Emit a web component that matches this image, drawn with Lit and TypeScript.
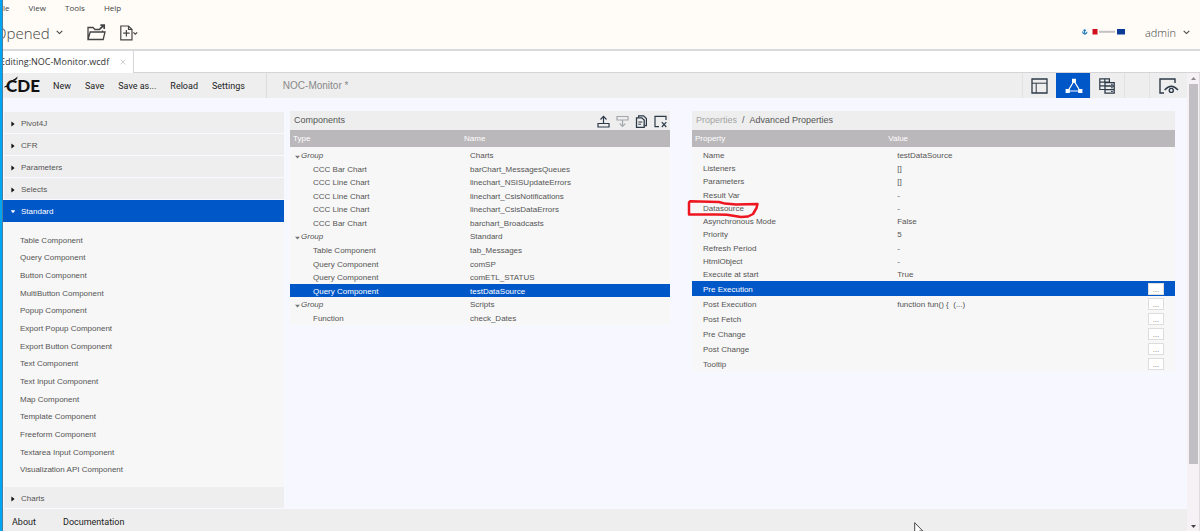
import { LitElement, html, css, svg, nothing } from "lit";
import { customElement, property, state } from "lit/decorators.js";
import { classMap } from "lit/directives/class-map.js";

interface ComponentRow {
  type: string;
  name: string;
  group?: boolean;
}

interface PropertyRow {
  label: string;
  value: string;
  marked?: boolean;
}

const COMPONENTS: ComponentRow[] = [
  { type: "Group", name: "Charts", group: true },
  { type: "CCC Bar Chart", name: "barChart_MessagesQueues" },
  { type: "CCC Line Chart", name: "linechart_NSISUpdateErrors" },
  { type: "CCC Line Chart", name: "linechart_CsisNotifications" },
  { type: "CCC Line Chart", name: "linechart_CsisDataErrors" },
  { type: "CCC Bar Chart", name: "barchart_Broadcasts" },
  { type: "Group", name: "Standard", group: true },
  { type: "Table Component", name: "tab_Messages" },
  { type: "Query Component", name: "comSP" },
  { type: "Query Component", name: "comETL_STATUS" },
  { type: "Query Component", name: "testDataSource" },
  { type: "Group", name: "Scripts", group: true },
  { type: "Function", name: "check_Dates" },
];

const PLAIN_PROPERTIES: PropertyRow[] = [
  { label: "Name", value: "testDataSource" },
  { label: "Listeners", value: "[]" },
  { label: "Parameters", value: "[]" },
  { label: "Result Var", value: "-" },
  { label: "Datasource", value: "-", marked: true },
  { label: "Asynchronous Mode", value: "False" },
  { label: "Priority", value: "5" },
  { label: "Refresh Period", value: "-" },
  { label: "HtmlObject", value: "-" },
  { label: "Execute at start", value: "True" },
];

const CODE_PROPERTIES: PropertyRow[] = [
  { label: "Pre Execution", value: "" },
  { label: "Post Execution", value: "function fun() {\u00a0 (...)" },
  { label: "Post Fetch", value: "" },
  { label: "Pre Change", value: "" },
  { label: "Post Change", value: "" },
  { label: "Tooltip", value: "" },
];

const STANDARD_ITEMS = [
  "Table Component",
  "Query Component",
  "Button Component",
  "MultiButton Component",
  "Popup Component",
  "Export Popup Component",
  "Export Button Component",
  "Text Component",
  "Text Input Component",
  "Map Component",
  "Template Component",
  "Freeform Component",
  "Textarea Input Component",
  "Visualization API Component",
];

const icon = (w: number, h: number, body: unknown) =>
  html`<svg width=${w} height=${h} viewBox="0 0 ${w} ${h}" fill="none" stroke="currentColor" aria-hidden="true">${body}</svg>`;

const chevron = icon(7, 5, svg`<path d="M0.7 0.9 L3.5 3.6 L6.3 0.9" stroke-width="1.1"/>`);

const reset = css`
  * { box-sizing: border-box; }
  button {
    font: inherit;
    color: inherit;
    background: none;
    border: 0;
    padding: 0;
    margin: 0;
    text-align: left;
  }
  svg { display: block; flex: none; }
  a { color: inherit; text-decoration: none; }
`;

@customElement("console-header")
export class ConsoleHeader extends LitElement {
  static styles = [
    reset,
    css`
      :host {
        display: block;
        overflow: hidden;
        background: #fffcf7;
        border-bottom: 2px solid #dadadd;
        color: #444;
        font-family: "Open Sans", sans-serif;
      }
      .menu {
        display: flex;
        gap: 19px;
        height: 16px;
        align-items: center;
        font-size: 8px;
        line-height: 12px;
      }
      .bar {
        display: flex;
        align-items: center;
        height: 33px;
        padding-right: 10px;
      }
      .perspective {
        display: flex;
        align-items: center;
        gap: 6px;
        margin-left: -8px;
        font-size: 15px;
        font-weight: 300;
        line-height: 20px;
      }
      .open { margin-left: 24px; }
      .new { margin-left: 14px; display: flex; align-items: center; }
      .brand { margin-left: auto; }
      .user {
        display: flex;
        align-items: center;
        gap: 7px;
        margin-left: 20px;
        font-size: 11px;
        font-weight: 300;
        line-height: 16px;
      }
    `,
  ];

  render() {
    return html`
      <nav class="menu">
        <button>le</button><button>View</button><button>Tools</button><button>Help</button>
      </nav>
      <div class="bar">
        <button class="perspective">Opened ${chevron}</button>
        <button class="open" aria-label="Open">
          ${icon(19, 17, svg`<path d="M1 15.5 V3.5 H6 L8 5.5 H13 M15.5 8 V6.5 M1 15.5 L3.2 8 H18 L16.2 15.5 Z" stroke-width="1.3"/><path d="M12.8 5 L17 1.2 M13.4 1.2 H17.2 V5" stroke-width="1.7"/>`)}
        </button>
        <button class="new" aria-label="Create new">
          ${icon(18, 16, svg`<path d="M0.8 1 H8.5 L12 4.5 V14.8 H0.8 Z M8.5 1 V4.5 H12" stroke-width="1.2"/><path d="M3.2 8.2 H9.6 M6.4 5 V11.4" stroke-width="1.2"/><path d="M13.4 7.4 L15.3 9.2 L17.2 7.4" stroke-width="1.2"/>`)}
        </button>
        <svg class="brand" width="43" height="7" viewBox="0 0 43 7" aria-hidden="true">
          <path d="M0.5 2.4 Q0.8 5.2 3 5.2 Q4.8 4.8 5 2.8 M2.6 0.2 V4.8 M1.3 1.4 H4" stroke="#2a7fc0" fill="none" stroke-width="1.2" />
          <rect x="10.5" y="0" width="5" height="5.5" fill="#d0101e" />
          <rect x="17" y="1.8" width="16" height="2" fill="#c2c2c4" />
          <rect x="35" y="0" width="8" height="5.5" fill="#0b3a96" />
        </svg>
        <button class="user">admin ${chevron}</button>
      </div>
    `;
  }
}

@customElement("editor-toolbar")
export class EditorToolbar extends LitElement {
  static styles = [
    reset,
    css`
      :host {
        display: flex;
        align-items: stretch;
        height: 25px;
        background: #eee;
        color: #222;
        font: 9px/12px Roboto, sans-serif;
      }
      .logo {
        display: flex;
        align-items: center;
        width: 38px;
        margin-right: 12px;
      }
      .mark { margin-right: -13px; }
      .word { font: 900 17px/20px Lato, sans-serif; color: #111; }
      .actions {
        display: flex;
        gap: 14px;
        align-items: center;
        padding-right: 21px;
        border-right: 1px solid #dcdcdc;
      }
      .title {
        flex: 1;
        display: flex;
        align-items: center;
        padding-left: 16px;
        color: #888;
        font: 10px/14px "Liberation Sans", sans-serif;
      }
      .views { display: flex; }
      .view, .spacer, .preview {
        display: flex;
        align-items: center;
        justify-content: center;
        width: 34px;
        border-left: 1px solid #e2e2e2;
        color: #2d3a48;
      }
      .spacer { width: 25px; }
      .preview { width: 38px; }
      .active { background: #0057c8; color: #fff; border-color: #0057c8; }
    `,
  ];

  render() {
    return html`
      <div class="logo">
        <svg class="mark" width="16" height="19" viewBox="0 0 16 19" aria-hidden="true">
          <path d="M0.8 11.6 Q1.6 9.6 3.6 9.4 L5 8 V11.6 Q3.6 10.6 0.8 11.6 Z M10 3.4 Q11.4 3.4 14.6 0.4 Q14.2 4 10.6 4.8 Z" fill="#111" />
        </svg>
        <span class="word">CDE</span>
      </div>
      <nav class="actions">
        <button>New</button><button>Save</button><button>Save as...</button><button>Reload</button><button>Settings</button>
      </nav>
      <span class="title">NOC-Monitor *</span>
      <div class="views">
        <button class="view" aria-label="Layout">
          ${icon(17, 16, svg`<path d="M1 1 H16 V15 H1 Z" stroke-width="1.3"/><path d="M1 5.2 H16 M5.2 5.2 V15" stroke-width="1"/>`)}
        </button>
        <button class="view active" aria-label="Components">
          ${icon(18, 16, svg`<path d="M9 3 L3 13 H15 Z" stroke-width="1.2"/><path d="M7 0.8 H11 V4.8 H7 Z M0.6 11 H4.8 V15 H0.6 Z M13.2 11 H17.4 V15 H13.2 Z" fill="currentColor" stroke="none"/>`)}
        </button>
        <button class="view" aria-label="Datasources">
          ${icon(17, 16, svg`<path d="M6 11.5 H0.8 V0.8 H10.4 V4 M0.8 4.2 H10.4 M0.8 7.8 H6 M5.8 0.8 V4" stroke-width="1.2"/><path d="M6 4.6 H15.2 V15.2 H6 Z M6 8 H15.2 M6 11.6 H15.2" stroke-width="1.3"/><path d="M12 6.3 H13.8 M12 9.8 H13.8 M12 13.4 H13.8" stroke-width="1"/>`)}
        </button>
        <span class="spacer"></span>
        <button class="preview" aria-label="Preview">
          ${icon(20, 16, svg`<path d="M5 15 H1 V1 H16 V5" stroke-width="1.4"/><path d="M5.6 12 Q12.3 4.4 19 12" stroke-width="1.4"/><circle cx="12.3" cy="12.4" r="2" stroke-width="1.4"/>`)}
        </button>
      </div>
    `;
  }
}

@customElement("component-palette")
export class ComponentPalette extends LitElement {
  static styles = [
    reset,
    css`
      :host {
        display: flex;
        flex-direction: column;
        font: 8px/12px "Liberation Sans", sans-serif;
        color: #555;
      }
      .section {
        display: flex;
        align-items: center;
        gap: 6px;
        height: 22px;
        padding: 2px 0 0 7px;
        margin-left: 1px;
        background: #eee;
        border-bottom: 1px solid #f9f9ff;
      }
      .section svg { fill: #111; }
      .open { background: #0057c8; color: #fff; border-bottom: 0; margin-left: 0; padding-left: 8px; }
      .open svg { fill: #fff; }
      .items {
        flex: 1;
        display: flex;
        flex-direction: column;
        margin: 0;
        padding: 10px 0 8px 17px;
        list-style: none;
        background: #f7f7f7;
      }
      .item { flex: 1; display: flex; align-items: center; }
    `,
  ];

  private section(label: string, open = false) {
    return html`
      <button class=${classMap({ section: true, open })} aria-expanded=${open}>
        <svg width="4" height="6" viewBox="0 0 4 6" aria-hidden="true">
          <path d=${open ? "M-0.5 1.2 H4.5 L2 4.2 Z" : "M0.4 0.4 L3.6 3 L0.4 5.6 Z"} />
        </svg>${label}
      </button>
    `;
  }

  render() {
    return html`
      ${["Pivot4J", "CFR", "Parameters", "Selects"].map((s) => this.section(s))}
      ${this.section("Standard", true)}
      <ul class="items">
        ${STANDARD_ITEMS.map((s) => html`<li class="item"><a href="#">${s}</a></li>`)}
      </ul>
      ${this.section("Charts")}
    `;
  }
}

const tableStyles = css`
  :host {
    display: block;
    color: #555;
    font: 8px/10px "Liberation Sans", sans-serif;
  }
  .head {
    display: flex;
    align-items: center;
    height: 19px;
    padding: 0 3px 2px 4px;
    background: #eee;
    font-size: 9px;
    line-height: 12px;
  }
  table {
    width: 100%;
    border-collapse: separate;
    border-spacing: 0;
    table-layout: fixed;
    background: #f7f7f7;
  }
  th {
    height: 18px;
    padding: 0 3px;
    border-bottom: 1px solid #f7f7f7;
    background: #bbb8bb;
    background-clip: padding-box;
    color: #fff;
    font-weight: 400;
    text-align: left;
  }
  td {
    height: 13px;
    padding: 2px 10px 0;
    white-space: nowrap;
  }
  .selected { background: #0057c8; color: #fff; }
`;

@customElement("components-panel")
export class ComponentsPanel extends LitElement {
  @state() private selected = "testDataSource";

  static styles = [
    reset,
    tableStyles,
    css`
      .tools { display: flex; align-items: center; gap: 6px; margin-left: auto; padding-top: 4px; color: #2d3a48; }
      .disabled { color: #a3a6aa; }
      .type { width: 45%; }
      .rows { height: 177px; }
      .rows td { padding-left: 9px; }
      .rows .kind { padding-left: 23px; }
      .rows .group td { height: 14px; }
      .rows .group .kind { padding-left: 5px; font-style: italic; }
      .label { display: flex; align-items: center; gap: 1px; }
      .label svg { fill: #777; }
    `,
  ];

  render() {
    return html`
      <div class="head">
        <span>Components</span>
        <div class="tools">
          <button aria-label="Move up">
            ${icon(13, 13, svg`<path d="M1 8.5 H12 V12 H1 Z M6.5 8 V1.5 M3.5 4.5 L6.5 1.4 L9.5 4.5" stroke-width="1.2"/>`)}
          </button>
          <button class="disabled" aria-label="Move down" disabled>
            ${icon(13, 13, svg`<path d="M1 1.5 H12 V5 H1 Z M6.5 5 V11.3 M3.7 8.6 L6.5 11.5 L9.3 8.6" stroke-width="1.2"/>`)}
          </button>
          <button aria-label="Duplicate">
            ${icon(13, 13, svg`<path d="M3.6 2.8 V0.8 H8.6 L11.4 3.5 V10.6 H9.5" stroke-width="1.2"/><path d="M1.5 2.8 H6.8 L9.2 5.1 V12.3 H1.5 Z" stroke-width="1.3"/><path d="M3.3 7 H7.4 M3.3 9.2 H6" stroke-width="1"/>`)}
          </button>
          <button aria-label="Delete">
            ${icon(13, 13, svg`<path d="M5 11.6 H1 V1.3 H12 V5" stroke-width="1.2"/><path d="M7.8 7.2 L12.3 12 M12.3 7.2 L7.8 12" stroke-width="1.2"/>`)}
          </button>
        </div>
      </div>
      <table>
        <thead>
          <tr><th class="type">Type</th><th>Name</th></tr>
        </thead>
        <tbody class="rows">
          ${COMPONENTS.map(
            (r) => html`
              <tr
                class=${classMap({ group: !!r.group, selected: r.name === this.selected })}
                @click=${() => (this.selected = r.name)}
              >
                <td class="kind">
                  <span class="label">
                    ${r.group
                      ? html`<svg width="5" height="5" viewBox="0 0 5 5" aria-hidden="true"><path d="M0 1.8 H5 L2.5 4.6 Z" /></svg>`
                      : nothing}${r.type}
                  </span>
                </td>
                <td>${r.name}</td>
              </tr>
            `
          )}
        </tbody>
      </table>
    `;
  }
}

@customElement("properties-panel")
export class PropertiesPanel extends LitElement {
  @property() current = "Pre Execution";

  static styles = [
    reset,
    tableStyles,
    css`
      .crumb { color: #a3a3a3; }
      .sep { margin: 0 5px; }
      .prop { width: 40%; }
      .edit { width: 40px; }
      .plain { height: 133px; }
      .code { height: 91px; }
      .code td { height: 15px; }
      td:first-child { padding-left: 11px; }
      td:nth-child(2) { padding-left: 12px; }
      .code .action { padding: 0 11px 0 0; }
      .more {
        display: block;
        width: 16px;
        height: 12px;
        margin-left: auto;
        border: 1px solid #ddd;
        background: #fff;
        color: #777;
        line-height: 11px;
        text-align: center;
      }
      .mark { position: relative; }
      .scribble { position: absolute; left: -16px; top: -5px; }
    `,
  ];

  render() {
    return html`
      <div class="head">
        <a class="crumb" href="#">Properties</a><span class="sep">/</span><span>Advanced Properties</span>
      </div>
      <table>
        <thead>
          <tr><th class="prop">Property</th><th>Value</th><th class="edit"></th></tr>
        </thead>
        <tbody class="plain">
          ${PLAIN_PROPERTIES.map(
            (r) => html`
              <tr>
                <td>
                  ${r.marked
                    ? html`<span class="mark">${r.label}<svg class="scribble" width="74" height="20" viewBox="0 0 74 20" fill="none" stroke="#ee1620" stroke-width="2.5" stroke-linejoin="round" aria-hidden="true"><path d="M2 15.5 L2 3.5 L3 2.2 L32 3 L38 4.6 L49 5.5 L70.5 5 L69.5 9 L66 15 L61 17.5 L54 18 L40 15.8 L29 15.6 Z" /></svg></span>`
                    : r.label}
                </td>
                <td>${r.value}</td>
                <td></td>
              </tr>
            `
          )}
        </tbody>
        <tbody class="code">
          ${CODE_PROPERTIES.map(
            (r) => html`
              <tr class=${classMap({ selected: r.label === this.current })}>
                <td>${r.label}</td>
                <td>${r.value}</td>
                <td class="action"><button class="more" aria-label="Edit ${r.label}">...</button></td>
              </tr>
            `
          )}
        </tbody>
      </table>
    `;
  }
}

@customElement("app-root")
export class AppRoot extends LitElement {
  static styles = [
    reset,
    css`
      :host {
        display: flex;
        height: 100vh;
        overflow: hidden;
        background: #fff;
        font-family: "Liberation Sans", sans-serif;
      }
      .edge { flex: none; width: 3px; background: #00a6f3; border-right: 1px solid #4d7f9b; }
      .window { flex: 1; min-width: 0; display: flex; flex-direction: column; }
      .tabs {
        display: flex;
        height: 22px;
        overflow: hidden;
        color: #333;
        font: 9px/14px "Open Sans", sans-serif;
      }
      .tab {
        display: flex;
        align-items: center;
        gap: 11px;
        width: 131px;
        border-right: 1px solid #d5d5d9;
      }
      .caption { margin-left: -3px; white-space: nowrap; }
      .close { color: #c4c4c4; }
      .rest { flex: 1; border-bottom: 1px solid #d5d5d9; }
      .frame { flex: 1; min-height: 0; display: flex; }
      .page { flex: 1; min-width: 0; display: flex; flex-direction: column; background: #f7f7ff; }
      .main { flex: 1; min-height: 0; display: flex; padding: 13px 12px 0 0; }
      .palette { width: 281px; margin-right: 6px; padding-top: 1px; }
      .components { flex: 380; margin-right: 22px; }
      .properties { flex: 483; }
      .footer {
        position: relative;
        display: flex;
        align-items: center;
        gap: 27px;
        height: 22px;
        padding: 4px 9px 0;
        background: #eee;
        color: #222;
        font: 9px/12px Roboto, sans-serif;
      }
      .cursor { position: absolute; left: 911px; top: 13px; }
      .scroll {
        width: 13px;
        display: flex;
        flex-direction: column;
        align-items: center;
        justify-content: space-between;
        background: #f5f1f5;
        border-right: 1px solid #ddd;
        padding: 4px 0 3px;
      }
      .track { flex: 1; width: 9px; margin: 4px 0; }
      .thumb { height: 87%; background: #c1bfc3; }
    `,
  ];

  render() {
    return html`
      <div class="edge"></div>
      <div class="window">
        <console-header></console-header>
        <div class="tabs">
          <div class="tab">
            <span class="caption">Editing:NOC-Monitor.wcdf</span>
            <button class="close" aria-label="Close tab">
              ${icon(6, 6, svg`<path d="M0.6 0.6 L5.4 5.4 M5.4 0.6 L0.6 5.4" stroke-width="0.8"/>`)}
            </button>
          </div>
          <div class="rest"></div>
        </div>
        <div class="frame">
          <div class="page">
            <editor-toolbar></editor-toolbar>
            <main class="main">
              <component-palette class="palette"></component-palette>
              <components-panel class="components"></components-panel>
              <properties-panel class="properties"></properties-panel>
            </main>
            <footer class="footer">
              <a href="#">About</a><a href="#">Documentation</a>
              <svg class="cursor" width="10" height="14" viewBox="0 0 10 14" aria-hidden="true">
                <path d="M0.7 0.7 V12 L3.3 9.6 L5.2 13.6 L7 12.8 L5.3 9 H8.8 Z" fill="#fff" stroke="#333" stroke-width="0.9" />
              </svg>
            </footer>
          </div>
          <div class="scroll">
            <svg width="5" height="3" viewBox="0 0 5 3" aria-hidden="true"><path d="M0 3 L2.5 0 L5 3 Z" fill="#8a8a8a" /></svg>
            <div class="track"><div class="thumb"></div></div>
            <svg width="5" height="3" viewBox="0 0 5 3" aria-hidden="true"><path d="M0 0 L2.5 3 L5 0 Z" fill="#444" /></svg>
          </div>
        </div>
      </div>
    `;
  }
}
